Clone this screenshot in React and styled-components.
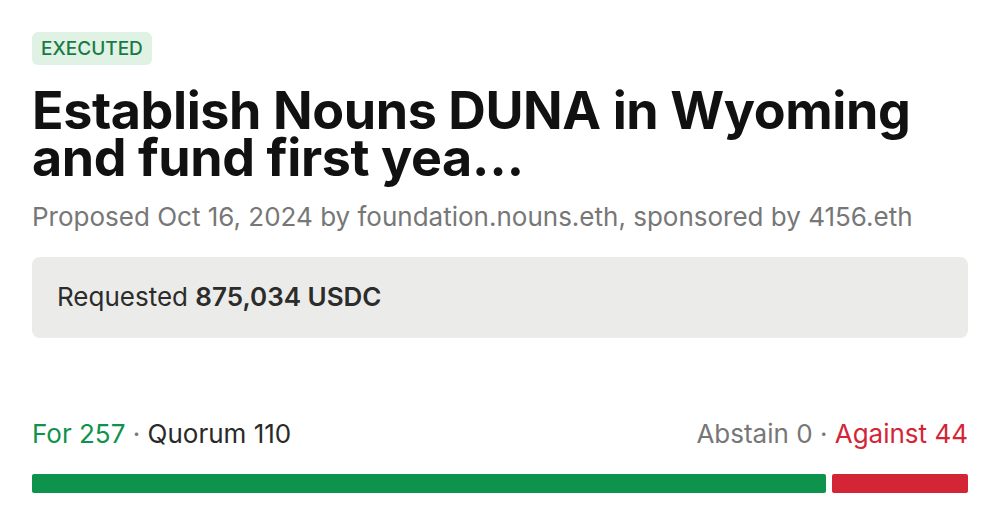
import styled, { createGlobalStyle } from "styled-components";

const GlobalStyle = createGlobalStyle`
  body {
    margin: 0;
    background: #fff;
    font-family: Inter, "Noto Sans", sans-serif;
    color: #111;
  }
`;

const proposal = {
  status: "Executed",
  title: "Establish Nouns DUNA in Wyoming and fund first yea…",
  meta: "Proposed Oct 16, 2024 by foundation.nouns.eth, sponsored by 4156.eth",
  requested: "875,034 USDC",
  forVotes: 257,
  againstVotes: 44,
  abstainVotes: 0,
  quorum: 110,
};

const Page = styled.main`
  padding: 32px;
  display: flex;
  flex-direction: column;
`;

const Badge = styled.span`
  align-self: flex-start;
  background: #e0f2e4;
  color: #1a7a47;
  font-size: 19px;
  font-weight: 500;
  text-transform: uppercase;
  line-height: 21px;
  padding: 6px 9px;
  border-radius: 6px;
`;

const Title = styled.h1`
  margin: 22px 0 0;
  font-size: 52px;
  font-weight: 700;
  line-height: 47px;
  letter-spacing: -0.4px;
  color: #111;
`;

const Meta = styled.p`
  margin: 20px 0 0;
  font-size: 26px;
  line-height: 32px;
  color: #777;
`;

const Requested = styled.div`
  margin-top: 24px;
  background: #ebebea;
  border-radius: 8px;
  padding: 24px 25px 25px;
  font-size: 26px;
  line-height: 32px;
  color: #2c2c2a;
  strong {
    font-weight: 600;
  }
`;

const VoteRow = styled.div`
  margin-top: 80px;
  display: flex;
  justify-content: space-between;
  font-size: 26px;
  line-height: 32px;
`;

const Count = styled.span`
  color: ${(p) => p.$color};
`;

const Dot = styled.span`
  color: #777;
`;

const Bar = styled.div`
  margin-top: 24px;
  display: flex;
  gap: 6px;
  height: 19px;
`;

const Segment = styled.div`
  background: ${(p) => p.$color};
  border-radius: 2px;
`;

export default function App() {
  const p = proposal;
  return (
    <>
      <GlobalStyle />
      <Page>
        <Badge>{p.status}</Badge>
        <Title>{p.title}</Title>
        <Meta>{p.meta}</Meta>
        <Requested>
          Requested <strong>{p.requested}</strong>
        </Requested>
        <VoteRow>
          <div>
            <Count $color="#0e934c">For {p.forVotes}</Count>
            <Dot> · </Dot>
            <Count $color="#2a2a28">Quorum {p.quorum}</Count>
          </div>
          <div>
            <Count $color="#777">Abstain {p.abstainVotes}</Count>
            <Dot> · </Dot>
            <Count $color="#d42537">Against {p.againstVotes}</Count>
          </div>
        </VoteRow>
        <Bar>
          <Segment $color="#0e934c" style={{ flex: p.forVotes }} />
          <Segment $color="#d42537" style={{ flex: p.againstVotes }} />
        </Bar>
      </Page>
    </>
  );
}
